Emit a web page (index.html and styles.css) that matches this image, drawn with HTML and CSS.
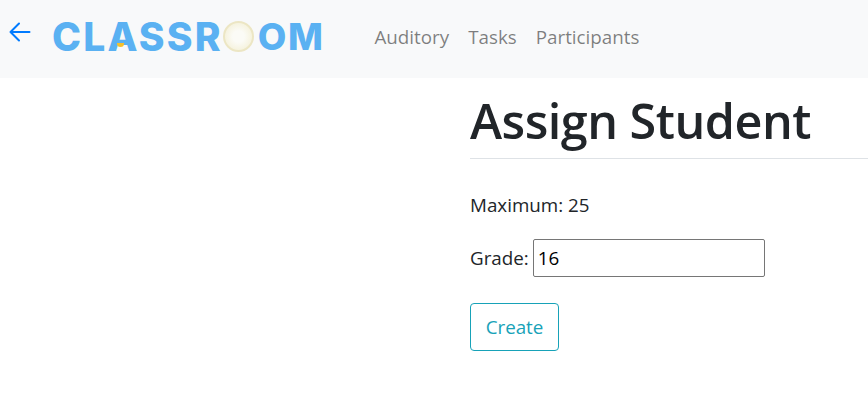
FILE: index.html
```html
<!DOCTYPE html>
<html lang="en">
  <head>
    <meta charset="UTF-8" />
    <title>Assign Student</title>
    <link rel="stylesheet" href="styles.css">
  </head>
  <body>
    <nav class="navbar">
      <a class="back" href="#">
        <svg width="22" height="22" viewBox="0 0 22 22" fill="none" stroke="#007bff" stroke-width="2" stroke-linecap="round" stroke-linejoin="round">
          <path d="M20.5 11H1.5M10 2.5L1.5 11L10 19.5" />
        </svg>
      </a>
      <a class="logo" href="#"><span class="logo-start">CLASSR</span><span class="logo-moon"></span><span class="logo-end">OM</span><span class="logo-dot"></span></a>
      <ul class="nav-links">
        <li><a href="#">Auditory</a></li>
        <li><a href="#">Tasks</a></li>
        <li><a href="#">Participants</a></li>
      </ul>
    </nav>

    <main class="content">
      <h1>Assign Student</h1>
      <hr />
      <form>
        <p>Maximum: 25</p>
        <div class="form-row">
          <label for="grade">Grade:</label>
          <input type="text" id="grade" value="16" />
        </div>
        <button type="submit">Create</button>
      </form>
    </main>
  </body>
</html>
```

FILE: styles.css
```css
body {
  margin: 0;
  font-family: "Open Sans", "Noto Sans", sans-serif;
  font-size: 18.8px;
  color: #212529;
  background: white;
  overflow: hidden;
}
.navbar {
  display: flex;
  align-items: center;
  height: 78px;
  background: #f8f9fa;
}
.back {
  display: flex;
  margin: 0 0 14px 9px;
}
.logo {
  position: relative;
  display: flex;
  align-items: center;
  margin: 0 0 6px 21px;
  font-family: "Inter", sans-serif;
  font-size: 39px;
  font-weight: 800;
  line-height: 1;
  color: #5ab1f2;
  text-decoration: none;
}
.logo-start {
  letter-spacing: 2.2px;
}
.logo-end {
  font-size: 37px;
  letter-spacing: 1.6px;
}
.logo-moon {
  width: 31px;
  height: 31px;
  margin: 0 4px 0 0;
  box-sizing: border-box;
  border-radius: 50%;
  border: 2px solid #ece6c4;
  background: radial-gradient(circle, #fbfbf6 30%, #f5f2dc 75%, #ebe5c0 100%);
}
/* yellow mark in the A */
.logo-dot {
  position: absolute;
  left: 65px;
  top: 26px;
  width: 7px;
  height: 4px;
  border-radius: 0 0 4px 4px;
  background: #f5c02c;
}
.nav-links {
  display: flex;
  gap: 19px;
  margin: 0 0 4px 50px;
  padding: 0;
  list-style: none;
}
.nav-links a {
  color: rgba(0, 0, 0, 0.5);
  text-decoration: none;
}
.content {
  padding-left: 470px;
}
h1 {
  margin: 12px 0 0;
  font-size: 48.5px;
  font-weight: 600;
  letter-spacing: -0.5px;
  line-height: 60px;
}
hr {
  margin: 8px 0 0;
  border: 0;
  border-top: 1px solid #dee2e6;
}
form p {
  margin: 33px 0 0;
  line-height: 27px;
}
.form-row {
  display: flex;
  align-items: center;
  gap: 4px;
  margin-top: 20px;
}
input {
  width: 232px;
  height: 38px;
  box-sizing: border-box;
  padding: 1px 4px;
  border: 1px solid #767676;
  border-radius: 2px;
  font-family: inherit;
  font-size: 18.8px;
  color: #000;
}
button {
  display: block;
  margin-top: 26px;
  width: 89px;
  height: 48px;
  padding: 0;
  background: white;
  border: 1px solid #17a2b8;
  border-radius: 4px;
  color: #17a2b8;
  font-family: inherit;
  font-size: 18.8px;
  cursor: pointer;
}
```
